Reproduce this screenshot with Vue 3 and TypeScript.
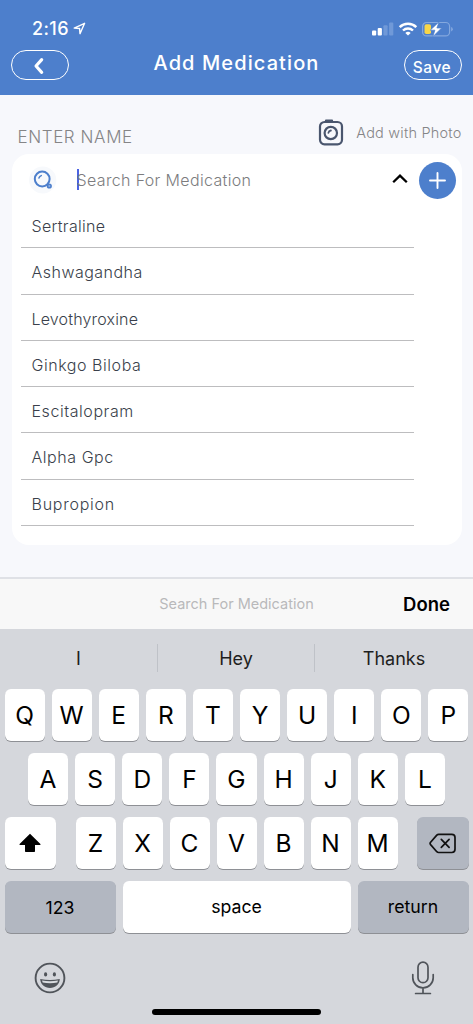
<script setup lang="ts">
import { ref } from 'vue'

interface Medication {
  name: string
  tracking: string
}

const medications = ref<Medication[]>([
  { name: 'Sertraline', tracking: '0.3px' },
  { name: 'Ashwagandha', tracking: '0.48px' },
  { name: 'Levothyroxine', tracking: '0.17px' },
  { name: 'Ginkgo Biloba', tracking: '0.55px' },
  { name: 'Escitalopram', tracking: '0.57px' },
  { name: 'Alpha Gpc', tracking: '0.55px' },
  { name: 'Bupropion', tracking: '0.75px' },
])

const suggestions: string[] = ['I', 'Hey', 'Thanks']
const topRow: string[] = [...'QWERTYUIOP']
const homeRow: string[] = [...'ASDFGHJKL']
const bottomRow: string[] = [...'ZXCVBNM']
</script>

<template>
  <div class="screen">
    <header class="header">
      <div class="status">
        <span class="time">2:16</span>
        <svg class="locate" width="13" height="13" viewBox="0 0 13 13">
          <path d="M1.2 6.1 11.6 1.3 7 11.7 6.6 6.5Z" fill="none" stroke="#fff" stroke-width="1.4" stroke-linejoin="round" />
        </svg>
        <svg class="indicators" width="82" height="16" viewBox="0 0 82 16">
          <rect x="0" y="9.5" width="4.2" height="5" rx="1" fill="#fff" />
          <rect x="5.7" y="7" width="4.2" height="7.5" rx="1" fill="#fff" />
          <rect x="11.4" y="4.2" width="4.2" height="10.3" rx="1" fill="#7099d8" />
          <rect x="17.1" y="1.5" width="4.2" height="13" rx="1" fill="#7099d8" />
          <path d="M27.7 6.1a12 12 0 0 1 16.6 0" fill="none" stroke="#fff" stroke-width="2.5" />
          <path d="M31 9.5a7.2 7.2 0 0 1 10 0" fill="none" stroke="#fff" stroke-width="2.4" />
          <path d="M33.3 11.9a4 4 0 0 1 5.4 0L36 14.5Z" fill="#fff" />
          <rect x="50.6" y="1.5" width="27" height="13.4" rx="4" fill="none" stroke="#84a8de" stroke-width="1.2" />
          <path d="M79.1 6v4.4q1.7-.6 1.7-2.2T79.1 6Z" fill="#84a8de" />
          <rect x="52.5" y="3.3" width="6.5" height="9.8" rx="1.8" fill="#f8d648" />
          <path d="M67 .9 58.2 9.2h4.7l-2.1 6.5 8.8-8.7h-4.7Z" fill="#fff" stroke="#4d7fcc" stroke-width=".7" />
        </svg>
      </div>
      <div class="nav">
        <button class="pill" aria-label="Back">
          <svg width="12" height="18" viewBox="0 0 12 18">
            <path d="M8.7 2.6 3 9l5.700 6.400" fill="none" stroke="#fff" stroke-width="3.1" stroke-linecap="round" stroke-linejoin="round" />
          </svg>
        </button>
        <h1 class="title">Add Medication</h1>
        <button class="pill save">Save</button>
      </div>
    </header>

    <main class="content">
      <div class="label-row">
        <span class="enter">ENTER NAME</span>
        <svg class="camera" width="26" height="27" viewBox="0 0 26 27">
          <rect x="2" y="3" width="22" height="22.3" rx="4.5" fill="none" stroke="#4a566e" stroke-width="2.2" />
          <path d="M8 1.6h6" stroke="#4a566e" stroke-width="2.2" stroke-linecap="round" />
          <circle cx="12.8" cy="14" r="6.2" fill="none" stroke="#4a566e" stroke-width="2.2" />
          <path d="M10.4 13.8a2.8 2.8 0 0 1 2.5-2.3" fill="none" stroke="#4a566e" stroke-width="1.8" stroke-linecap="round" />
        </svg>
        <span class="photo">Add with Photo</span>
      </div>

      <section class="card">
        <div class="search">
          <svg class="glass" width="28" height="28" viewBox="0 0 28 28">
            <circle cx="13.7" cy="14" r="13.6" fill="#f7f9fc" />
            <circle cx="13.2" cy="13" r="7.4" fill="none" stroke="#4d7fcc" stroke-width="2" />
            <path d="M9.900 12q.7-1.800 2.400-2.400" fill="none" stroke="#4d7fcc" stroke-width="1.5" stroke-linecap="round" />
            <circle cx="20.300" cy="20" r="1.8" fill="#8fb1e4" stroke="#4d7fcc" stroke-width="1.6" />
          </svg>
          <span class="cursor"></span>
          <span class="placeholder">Search For Medication</span>
          <svg class="caret" width="18" height="12" viewBox="0 0 18 12">
            <path d="M2.2 9.3 9 2.6l6.8 6.7" fill="none" stroke="#000" stroke-width="2.3" />
          </svg>
          <button class="add" aria-label="Add">
            <svg width="37" height="37" viewBox="0 0 37 37">
              <path d="M18.5 11v15M11 18.5h15" stroke="#fff" stroke-width="1.9" stroke-linecap="round" />
            </svg>
          </button>
        </div>
        <ul class="list">
          <li v-for="m in medications" :key="m.name" :style="{ letterSpacing: m.tracking }">{{ m.name }}</li>
        </ul>
      </section>
    </main>

    <div class="accessory">
      <span></span>
      <span class="hint">Search For Medication</span>
      <span class="done">Done</span>
    </div>

    <section class="keyboard">
      <div class="suggestions">
        <span v-for="s in suggestions" :key="s" class="suggestion">{{ s }}</span>
      </div>
      <div class="keys">
        <div class="row">
          <div v-for="k in topRow" :key="k" class="key">{{ k }}</div>
        </div>
        <div class="row home">
          <div v-for="k in homeRow" :key="k" class="key">{{ k }}</div>
        </div>
        <div class="row bottom">
          <div class="key side">
            <svg width="24" height="20" viewBox="0 0 24 20">
              <path d="M12 .8 22.4 11q.6.9-.5.9H17v6q0 1.2-1.2 1.2H8.2Q7 19.100 7 17.900v-6H2.100q-1.100 0-.5-.9Z" fill="#000" />
            </svg>
          </div>
          <div class="letters">
            <div v-for="k in bottomRow" :key="k" class="key">{{ k }}</div>
          </div>
          <div class="key side dark">
            <svg width="28" height="21" viewBox="0 0 28 21">
              <path d="M9.6 1.3h13.2q3.2 0 3.2 3.2v11.8q0 3.2-3.2 3.2H9.6q-1 0-1.8-.8L1.6 11.6q-1-1.2 0-2.4L7.8 2.1q.8-.8 1.8-.8Z" fill="none" stroke="#111" stroke-width="1.7" stroke-linejoin="round" />
              <path d="m12.3 6.3 7.8 8m0-8-7.8 8" stroke="#111" stroke-width="1.7" stroke-linecap="round" />
            </svg>
          </div>
        </div>
        <div class="row">
          <div class="key word dark num">123</div>
          <div class="key word space">space</div>
          <div class="key word dark ret">return</div>
        </div>
      </div>
      <div class="tools">
        <svg width="32" height="32" viewBox="0 0 32 32">
          <circle cx="16" cy="16" r="14.4" fill="none" stroke="#50545a" stroke-width="1.9" />
          <ellipse cx="11.6" cy="12.4" rx="1.6" ry="2.1" fill="#50545a" />
          <ellipse cx="20.4" cy="12.4" rx="1.6" ry="2.1" fill="#50545a" />
          <path d="M6.2 17q9.8 1.8 19.6 0c-.3 5.4-4.6 8.900-9.800 8.900s-9.500-3.500-9.800-8.900Z" fill="#50545a" />
          <path d="M8 18.500q8 1.300 16 0l-.7 2q-7.300 1.300-14.600 0Z" fill="#d9dce0" />
        </svg>
        <svg width="24" height="34" viewBox="0 0 24 34">
          <rect x="7" y="1.2" width="10" height="20.5" rx="5" fill="none" stroke="#50545a" stroke-width="1.7" />
          <path d="M1.8 13.5v3.2a10.2 10.2 0 0 0 20.4 0v-3.2M12 26.9v5.6M4.6 32.5h14.8" fill="none" stroke="#50545a" stroke-width="1.7" stroke-linecap="round" />
        </svg>
      </div>
      <div class="home-bar"></div>
    </section>
  </div>
</template>

<style>
body {
  margin: 0;
}
</style>

<style scoped>
.screen {
  width: 473px;
  height: 1024px;
  display: flex;
  flex-direction: column;
  overflow: hidden;
  background: #f7f8fc;
  font-family: Inter, "Liberation Sans", sans-serif;
  white-space: nowrap;
}
.screen * {
  box-sizing: border-box;
}
svg {
  display: block;
  flex: none;
}
button {
  font: inherit;
  padding: 0;
  margin: 0;
}
.header {
  flex: none;
  height: 95px;
  background: #4d7fcc;
  color: #fff;
}
.status {
  display: flex;
  align-items: center;
  height: 50px;
  padding: 7px 19px 0 32px;
}
.time {
  font-size: 18px;
  font-weight: 500;
  letter-spacing: 0.4px;
  width: 41px;
}
.indicators {
  margin-left: auto;
}
.nav {
  display: flex;
  justify-content: space-between;
  align-items: center;
  height: 30px;
  padding: 0 11px;
}
.pill {
  display: flex;
  align-items: center;
  justify-content: center;
  width: 58px;
  height: 30px;
  border: 1.6px solid #fff;
  border-radius: 15px;
  background: none;
  color: #fff;
}
.pill svg {
  margin: 2px 3px 0 0;
}
.title {
  margin: 0 0 4px;
  font-size: 20px;
  line-height: 24px;
  font-weight: 500;
  letter-spacing: 1.1px;
}
.pill.save {
  font-size: 15.5px;
  font-weight: 500;
  letter-spacing: 0.5px;
  padding: 4px 2px 0 0;
}
.content {
  flex: none;
  height: 482px;
  padding: 23px 11.5px 0;
}
.label-row {
  display: flex;
  align-items: center;
  height: 36px;
  padding-left: 6px;
  color: #858587;
}
.enter {
  font-size: 17px;
  font-weight: 300;
  letter-spacing: 0.6px;
  padding-top: 2px;
  width: 301px;
}
.camera {
  margin-top: -8px;
}
.photo {
  font-size: 14.5px;
  font-weight: 300;
  letter-spacing: 0.2px;
  margin: -7px 0 0 12px;
}
.card {
  height: 391px;
  border-radius: 17px;
  background: #fff;
}
.search {
  display: flex;
  align-items: center;
  height: 48px;
  padding: 4px 6px 0 17px;
}
.cursor {
  width: 2px;
  height: 21px;
  margin: -2px 0 0 20px;
  background: #4b63e2;
}
.placeholder {
  font-size: 16px;
  font-weight: 300;
  color: #7c7c7e;
  margin-left: -2px;
  letter-spacing: 0.35px;
}
.caret {
  margin: -2px 10px 0 auto;
}
.add {
  width: 37px;
  height: 37px;
  border: 0;
  border-radius: 50%;
  background: #4d7fcc;
}
.list {
  list-style: none;
  margin: 0;
  padding: 0 48px 0 9px;
}
.list li {
  height: 46.25px;
  padding: 3px 0 0 11px;
  border-bottom: 1px solid #bdbdbf;
  font-size: 16px;
  line-height: 43px;
  font-weight: 300;
  color: #3a3f4b;
}
.accessory {
  flex: none;
  display: grid;
  grid-template-columns: 1fr auto 1fr;
  align-items: center;
  height: 52px;
  padding: 0 23px 1px;
  border-top: 2px solid #dfe1e6;
  background: #f8f8f8;
}
.hint {
  font-size: 14.5px;
  color: #b9b9bb;
}
.done {
  justify-self: end;
  font-size: 18.5px;
  font-weight: 600;
  color: #000;
}
.keyboard {
  flex: 1;
  background: #d5d7dc;
}
.suggestions {
  display: grid;
  grid-template-columns: 157px 157px 159px;
  height: 60px;
  align-items: center;
}
.suggestion {
  height: 28px;
  line-height: 29px;
  margin-top: -3px;
  text-align: center;
  font-size: 18px;
  color: #1e1e20;
}
.suggestion + .suggestion {
  border-left: 1px solid #bfc2c8;
}
.keys {
  display: flex;
  flex-direction: column;
  gap: 12px;
  padding: 0 4.5px;
}
.row,
.letters {
  display: flex;
  gap: 7px;
}
.home {
  padding: 0 23.5px;
}
.bottom {
  justify-content: space-between;
}
.bottom .letters {
  width: 322px;
}
.key {
  display: flex;
  align-items: center;
  justify-content: center;
  flex: 1;
  height: 52px;
  border-radius: 6px;
  background: #fff;
  box-shadow: 0 1px 0 #8e9095;
  color: #000;
  font-size: 24.5px;
}
.key.side {
  flex: 0 0 51.5px;
}
.key.dark {
  background: #b2b7c1;
}
.key.word {
  font-size: 17.7px;
}
.key.num,
.key.ret {
  flex: 0 0 111px;
}
.key.space,
.key.ret {
  padding-bottom: 2px;
}
.tools {
  display: flex;
  justify-content: space-between;
  align-items: center;
  height: 76px;
  padding: 13px 38px 0 34px;
}
.home-bar {
  width: 169px;
  height: 6px;
  margin: 0 auto;
  border-radius: 3px;
  background: #000;
}
</style>
